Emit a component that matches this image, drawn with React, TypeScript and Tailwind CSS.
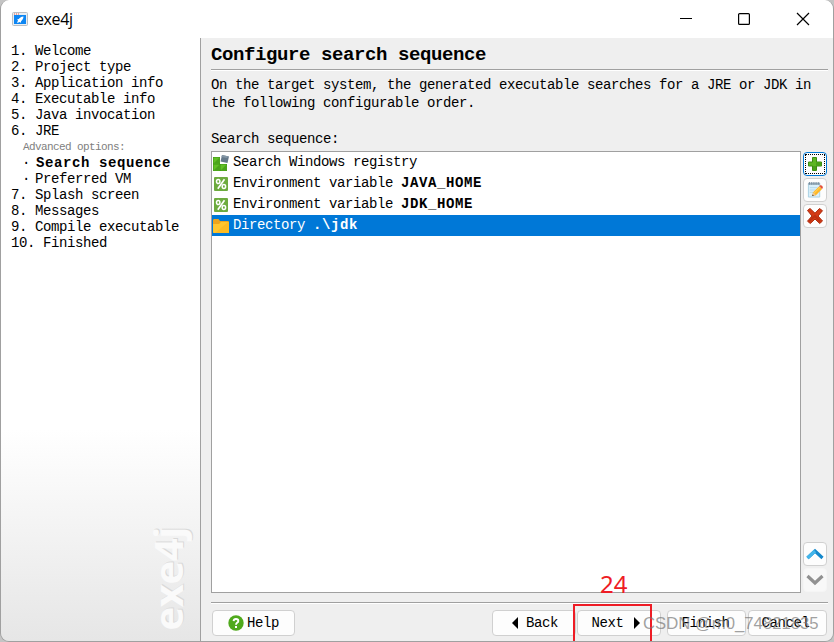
import type { ReactNode } from 'react'

const steps = [
    '1. Welcome',
    '2. Project type',
    '3. Application info',
    '4. Executable info',
    '5. Java invocation',
    '6. JRE',
]

const lastSteps = [
    '7. Splash screen',
    '8. Messages',
    '9. Compile executable',
    '10. Finished',
]

function AppIcon() {
    return (
        <svg width="16" height="14" viewBox="0 0 16 14">
            <rect x="0.5" y="0.5" width="15" height="13" rx="1" fill="#e9eef2" stroke="#b9bec4" />
            <path d="M2 1.500h1v1H2zM4 1.500h1v1H4zM6 1.500h1v1H6z" fill="#f0563c" />
            <rect x="2" y="3" width="12" height="9" fill="#0d86f3" />
            <path d="M11.500 4.500C9 4.600 7.500 6 6.800 7L5 7.500l1 .8-1 2.700L7.800 10l.8 1 .5-1.800c1.200-1 2.300-2.400 2.400-4.700z" fill="#fff" />
        </svg>
    )
}

function RegistryIcon() {
    return (
        <svg width="16" height="16" viewBox="0 0 16 16">
            <path d="M0 2h7v7h7v7H0z" fill="#3f9415" />
            <path d="M.5 2.500h6v6h-6zM.5 9.500h6v6h-6zM7.500 9.500h6v6h-6z" fill="#62c026" />
            <path d="M.5 8.500l6-6v6zM.5 15.500l6-6v6zM7.500 15.500l6-6v6z" fill="#4ba31c" />
            <path d="M9 0l7 1.500-1.500 6.500-7-1.500z" fill="#65798a" />
            <path d="M9 0l7 1.500-2.500 1.500-5-1z" fill="#8496a5" />
        </svg>
    )
}

function PercentIcon() {
    return (
        <svg width="16" height="16" viewBox="0 0 16 16">
            <rect x="1" y="1" width="14" height="14" rx="1" fill="#6dab3e" />
            <path d="M11.500 3.200L4.800 12.800" stroke="#fff" strokeWidth="1.700" />
            <ellipse cx="5.200" cy="5.500" rx="1.700" ry="2" fill="none" stroke="#fff" strokeWidth="1.500" />
            <ellipse cx="10.900" cy="10.400" rx="1.700" ry="2" fill="none" stroke="#fff" strokeWidth="1.500" />
        </svg>
    )
}

function FolderIcon() {
    return (
        <svg width="16" height="14" viewBox="0 0 16 14">
            <path d="M0 1.500Q0 0 1 0h4.500L7 2h8q1 0 1 1v10q0 1-1 1H1q-1 0-1-1z" fill="#eda41c" />
            <path d="M0 5h6l2-2h8v10q0 1-1 1H1q-1 0-1-1z" fill="#ffc62e" />
            <path d="M2 14L15 3h1v10q0 1-1 1z" fill="#fdbb22" />
        </svg>
    )
}

function PlusIcon() {
    return (
        <svg width="16" height="16" viewBox="0 0 16 16">
            <path d="M5.500 1.500h4v4.500h5v4h-5v4.500h-4V10H1.500V6h4z" fill="#5db524" stroke="#3d8d12" />
            <path d="M6 10h3v4H6zM9 6.500h5v3H9z" fill="#49a01b" />
        </svg>
    )
}

function EditIcon() {
    return (
        <svg width="16" height="16" viewBox="0 0 17 17">
            <path d="M1.500 2h12v14h-12z" fill="#d9effa" stroke="#a8cfe2" />
            <path d="M1 1h13v2H1z" fill="#a9bcc9" />
            <path d="M2 0h1v3H2zM4 0h1v3H4zM6 0h1v3H6zM8 0h1v3H8zM10 0h1v3h-1zM12 0h1v3h-1z" fill="#6b8496" />
            <path d="M3 6h8M3 8.500h6M3 11h4" stroke="#b2d8ea" />
            <path d="M5.500 15l1-4L13 4.500l3 3L9.500 14z" fill="#ffb726" />
            <path d="M13 4.500l1-1q1-.5 2 .5t.8 2l-.8 1.500z" fill="#e44e38" />
            <path d="M7.500 12L14 5.500" stroke="#ffdb68" />
            <path d="M5.500 15l1-4 3 3z" fill="#eac497" />
            <path d="M5.500 15l.5-1.800 1.300 1.300z" fill="#333" />
        </svg>
    )
}

function DeleteIcon() {
    return (
        <svg width="18" height="18" viewBox="0 0 18 18">
            <path d="M1.500 3.500L4 1.500l5 4.700 4.500-4.700 3 2.200L12 9l4.500 5-2.800 2.500L9 12l-4.700 4.500-2.800-2.300L6 9z" fill="#d53b16" stroke="#aa2b0d" />
            <path d="M3 14.200L9 9l5 5.500" fill="none" stroke="#be3011" strokeWidth="2" />
        </svg>
    )
}

function HelpIcon() {
    return (
        <svg width="16" height="16" viewBox="0 0 16 16">
            <circle cx="8" cy="8" r="7.700" fill="#4fa91c" />
            <path d="M5.600 6.100Q5.700 4 8 4t2.300 1.900Q10.300 7 9.200 7.600T8 9.700" fill="none" stroke="#fff" strokeWidth="1.900" />
            <path d="M7 11h2v2H7z" fill="#fff" />
        </svg>
    )
}

function Chevron({ up = false }: { up?: boolean }) {
    return (
        <svg width="18" height="12" viewBox="0 0 18 12">
            {up ? (
                <>
                    <path d="M1.500 10L9 3l7.500 7" fill="none" stroke="#1488cc" strokeWidth="3.200" />
                    <path d="M1.500 10L9 3" stroke="#43b5ea" strokeWidth="3.200" />
                </>
            ) : (
                <path d="M1.500 2L9 9l7.500-7" fill="none" stroke="#919191" strokeWidth="3.200" />
            )}
        </svg>
    )
}

function TitleBar() {
    return (
        <div className="flex h-[38px] shrink-0 items-center bg-white pl-[11px]">
            <AppIcon />
            <span className="ml-[7px] font-['Open_Sans','Noto_Sans',sans-serif] text-[16px] leading-5 text-black">exe4j</span>
            <svg className="mr-[22px] ml-auto" width="132" height="14" viewBox="0 0 132 14" fill="none" stroke="#000">
                <path d="M1 6.500h12" />
                <rect x="59.600" y="1.600" width="10.800" height="10.800" rx="1" strokeWidth="1.200" />
                <path d="M118 1l12 12M130 1l-12 12" strokeWidth="1.200" />
            </svg>
        </div>
    )
}

function Sidebar() {
    return (
        <div className="relative w-[200px] shrink-0 border-r border-[#a0a0a0] bg-linear-to-b from-white from-65% to-[#e6e6e6] pt-[5px] pl-[10px] whitespace-pre">
            {steps.map((step) => (
                <div key={step} className="h-4 leading-4">{step}</div>
            ))}
            <div className="h-4 pl-3 text-[11px] leading-4 tracking-[-0.6px] text-[#808080]">Advanced options:</div>
            <div className="flex h-4 pl-[11px] leading-4">
                <span className="w-[14px]">·</span>
                <b className="tracking-[0.6px]">Search sequence</b>
            </div>
            <div className="flex h-4 pl-[11px] leading-4">
                <span className="w-[13px]">·</span>
                <span>Preferred VM</span>
            </div>
            {lastSteps.map((step) => (
                <div key={step} className="h-4 leading-4">{step}</div>
            ))}
            <div className="absolute right-[9px] bottom-[11px] rotate-180 font-['Open_Sans',sans-serif] text-[40px] leading-[46px] font-bold text-[#fafafa] [text-shadow:1px_1px_0_#d9d9d9] [writing-mode:vertical-rl]">exe4j</div>
        </div>
    )
}

function Row({ icon, selected = false, children }: { icon: ReactNode; selected?: boolean; children: ReactNode }) {
    return (
        <div className={selected ? 'flex h-[21px] items-center bg-[#0078d7] pl-px text-white' : 'flex h-[21px] items-center pl-px'}>
            <span className="flex w-5 shrink-0">{icon}</span>
            <span className="pb-[2px] whitespace-pre">{children}</span>
        </div>
    )
}

function ToolButton({ focused = false, disabled = false, children }: { focused?: boolean; disabled?: boolean; children: ReactNode }) {
    let style = 'border-[#d0d0d0] bg-[#fdfdfd]'
    if (focused) style = 'border-[#0078d7] bg-[#fdfdfd]'
    if (disabled) style = 'border-[#f5f5f5] bg-[#f8f8f8]'

    return (
        <button className={`relative flex size-6 items-center justify-center rounded-[4px] border ${style}`}>
            {children}
            {focused && <span className="absolute inset-px border border-dotted border-black" />}
        </button>
    )
}

function Button({ className, children }: { className: string; children: ReactNode }) {
    return (
        <button className={`flex h-[26px] items-center justify-center rounded-[4px] border border-[#d0d0d0] bg-[#fdfdfd] ${className}`}>
            {children}
        </button>
    )
}

function Footer() {
    return (
        <div className="relative mt-[6px] flex">
            <Button className="ml-px w-[83px] gap-[3px]">
                <HelpIcon />
                <span className="pb-px">Help</span>
            </Button>
            <Button className="ml-[197px] w-[84px] gap-2 pl-px">
                <svg width="7" height="12" viewBox="0 0 7 12"><path d="M7 0v12L1 6z" /></svg>
                <span className="pb-px">Back</span>
            </Button>
            <Button className="ml-px w-[84px] gap-[10px] pr-[6px]">
                <span className="pb-px">Next</span>
                <svg width="7" height="12" viewBox="0 0 7 12"><path d="M0 0v12l6-6z" /></svg>
            </Button>
            <Button className="ml-[6px] w-[79px] pr-[2px] pb-px">Finish</Button>
            <Button className="ml-[2px] w-[79px] pr-1 pb-px">Cancel</Button>
            <div className="absolute top-[-6px] left-[362px] h-[42px] w-[79px] border-2 border-[#ee1c25]" />
            <div className="absolute top-[-42px] left-[389px] font-['Noto_Sans',sans-serif] text-[24px] leading-8 tracking-normal text-[#ee1c25]">24</div>
            <div className="absolute top-[4px] left-[432px] font-['Liberation_Sans',sans-serif] text-[16.7px] leading-5 tracking-normal whitespace-nowrap text-[#777]/70">CSDN @m0_74821835</div>
        </div>
    )
}

function App() {
    return (
        <div className="h-[642px] w-[834px] overflow-hidden bg-[#c4c4c4] font-['Liberation_Mono',monospace] text-[14px] leading-[18px] tracking-[-0.4px] text-black">
            <div className="flex h-[642px] w-[834px] flex-col overflow-hidden rounded-[9px] border border-t-0 border-[#a0a0a0]">
                <TitleBar />
                <div className="flex min-h-0 flex-1">
                    <Sidebar />
                    <div className="flex min-w-0 flex-1 flex-col bg-[#efefef] pl-[10px]">
                        <h1 className="mr-[5px] h-8 border-b border-[#a0a0a0] pt-[5px] text-[19px] leading-[24px] font-bold tracking-[-0.4px] shadow-[0_1px_0_#fff]">Configure search sequence</h1>
                        <p className="mt-[6px] w-[610px]">On the target system, the generated executable searches for a JRE or JDK in the following configurable order.</p>
                        <div className="mt-[18px]">Search sequence:</div>
                        <div className="mt-[3px] flex h-[442px] gap-[2px]">
                            <div className="w-[590px] border border-[#a0a0a0] bg-white">
                                <Row icon={<RegistryIcon />}>Search Windows registry</Row>
                                <Row icon={<PercentIcon />}>Environment variable <b className="tracking-[0.6px]">JAVA_HOME</b></Row>
                                <Row icon={<PercentIcon />}>Environment variable <b className="tracking-[0.6px]">JDK_HOME</b></Row>
                                <Row icon={<FolderIcon />} selected>Directory <b className="tracking-[0.6px]">.\jdk</b></Row>
                            </div>
                            <div className="flex flex-col gap-[2px] pt-px pb-px">
                                <ToolButton focused><PlusIcon /></ToolButton>
                                <ToolButton><EditIcon /></ToolButton>
                                <ToolButton><DeleteIcon /></ToolButton>
                                <div className="flex-1" />
                                <ToolButton><Chevron up /></ToolButton>
                                <ToolButton disabled><Chevron /></ToolButton>
                            </div>
                        </div>
                        <div className="mt-[9px] mr-[5px] h-[2px] border-b border-t border-t-[#a0a0a0] border-b-white" />
                        <Footer />
                    </div>
                </div>
            </div>
        </div>
    )
}

export default App
